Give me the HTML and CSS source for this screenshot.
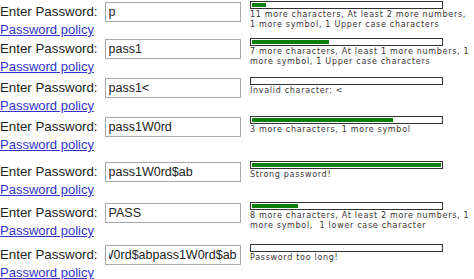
FILE: index.html
```html
<!DOCTYPE html>
<html>
<head>
<meta charset="utf-8">
<title>Password strength</title>
<link rel="stylesheet" href="styles.css">
</head>
<body>
<div class="list">
  <div class="row">
    <div class="entry">
      <div class="field"><span class="label">Enter Password:</span><input class="pw" type="text" value="p"></div>
      <a class="policy" href="#">Password policy</a>
    </div>
    <div class="strength">
      <div class="meter"><div class="fill" style="width:7.4%"></div></div>
      <div class="msg">11 more characters, At least 2 more numbers,<br>1 more symbol, 1 Upper case characters</div>
    </div>
  </div>
  <div class="row">
    <div class="entry">
      <div class="field"><span class="label">Enter Password:</span><input class="pw" type="text" value="pass1"></div>
      <a class="policy" href="#">Password policy</a>
    </div>
    <div class="strength">
      <div class="meter"><div class="fill" style="width:40.7%"></div></div>
      <div class="msg">7 more characters, At least 1 more numbers, 1<br>more symbol, 1 Upper case characters</div>
    </div>
  </div>
  <div class="row">
    <div class="entry">
      <div class="field"><span class="label">Enter Password:</span><input class="pw" type="text" value="pass1&lt;"></div>
      <a class="policy" href="#">Password policy</a>
    </div>
    <div class="strength">
      <div class="meter"><div class="fill" style="width:0%"></div></div>
      <div class="msg">Invalid character: &lt;</div>
    </div>
  </div>
  <div class="row">
    <div class="entry">
      <div class="field"><span class="label">Enter Password:</span><input class="pw" type="text" value="pass1W0rd"></div>
      <a class="policy" href="#">Password policy</a>
    </div>
    <div class="strength">
      <div class="meter"><div class="fill" style="width:74.6%"></div></div>
      <div class="msg">3 more characters, 1 more symbol</div>
    </div>
  </div>
  <div class="row">
    <div class="entry">
      <div class="field"><span class="label">Enter Password:</span><input class="pw" type="text" value="pass1W0rd$ab"></div>
      <a class="policy" href="#">Password policy</a>
    </div>
    <div class="strength">
      <div class="meter"><div class="fill" style="width:100%"></div></div>
      <div class="msg">Strong password!</div>
    </div>
  </div>
  <div class="row">
    <div class="entry">
      <div class="field"><span class="label">Enter Password:</span><input class="pw" type="text" value="PASS"></div>
      <a class="policy" href="#">Password policy</a>
    </div>
    <div class="strength">
      <div class="meter"><div class="fill" style="width:24.3%"></div></div>
      <div class="msg">8 more characters, At least 2 more numbers, 1<br>more symbol,&nbsp; 1 lower case character</div>
    </div>
  </div>
  <div class="row">
    <div class="entry">
      <div class="field"><span class="label">Enter Password:</span><input class="pw pw-end" type="text" value="pass1W0rd$abpass1W0rd$ab"></div>
      <a class="policy" href="#">Password policy</a>
    </div>
    <div class="strength">
      <div class="meter"><div class="fill" style="width:0%"></div></div>
      <div class="msg">Password too long!</div>
    </div>
  </div>
</div>
</body>
</html>
```

FILE: styles.css
```css
html, body {
  margin: 0;
  padding: 0;
  overflow: hidden;
  background: #ffffff;
}

.list {
  padding-top: 2px;
  font-family: "Liberation Sans", Arial, sans-serif;
}

.row {
  display: flex;
  align-items: flex-start;
  height: 40px;
}
.row:nth-child(1) { height: 37px; }
.row:nth-child(2) { height: 39px; }
.row:nth-child(3) { height: 39px; }
.row:nth-child(4) { height: 45px; }
.row:nth-child(5) { height: 41px; }
.row:nth-child(6) { height: 42px; }

.entry {
  flex: none;
  width: 250px;
}

.field {
  display: flex;
  align-items: baseline;
  gap: 7px;
}

.label {
  font-size: 13.3px;
  color: #222222;
  white-space: nowrap;
}

.pw {
  box-sizing: border-box;
  width: 136px;
  height: 20px;
  margin: 0;
  padding: 0 3px;
  border: 1px solid #a7a7ad;
  font-family: "Liberation Sans", Arial, sans-serif;
  font-size: 12.5px;
  color: #222222;
  background: #ffffff;
  outline: none;
}

.pw-end {
  direction: rtl;
}

.policy {
  display: block;
  width: fit-content;
  font-size: 13px;
  line-height: 15px;
  color: #3434cc;
  text-decoration: underline;
}

.strength {
  flex: none;
  width: 240px;
}

.meter {
  box-sizing: border-box;
  width: 193px;
  height: 8px;
  margin-top: -1px;
  padding: 1px;
  border: 1px solid #333333;
  background: #ffffff;
}

.fill {
  height: 100%;
  background: #0b7f0b;
}

.msg {
  margin-top: 1px;
  font-family: "DejaVu Sans", Verdana, sans-serif;
  font-size: 8px;
  line-height: 10px;
  letter-spacing: 0.7px;
  color: #3a3438;
  white-space: nowrap;
}
```
